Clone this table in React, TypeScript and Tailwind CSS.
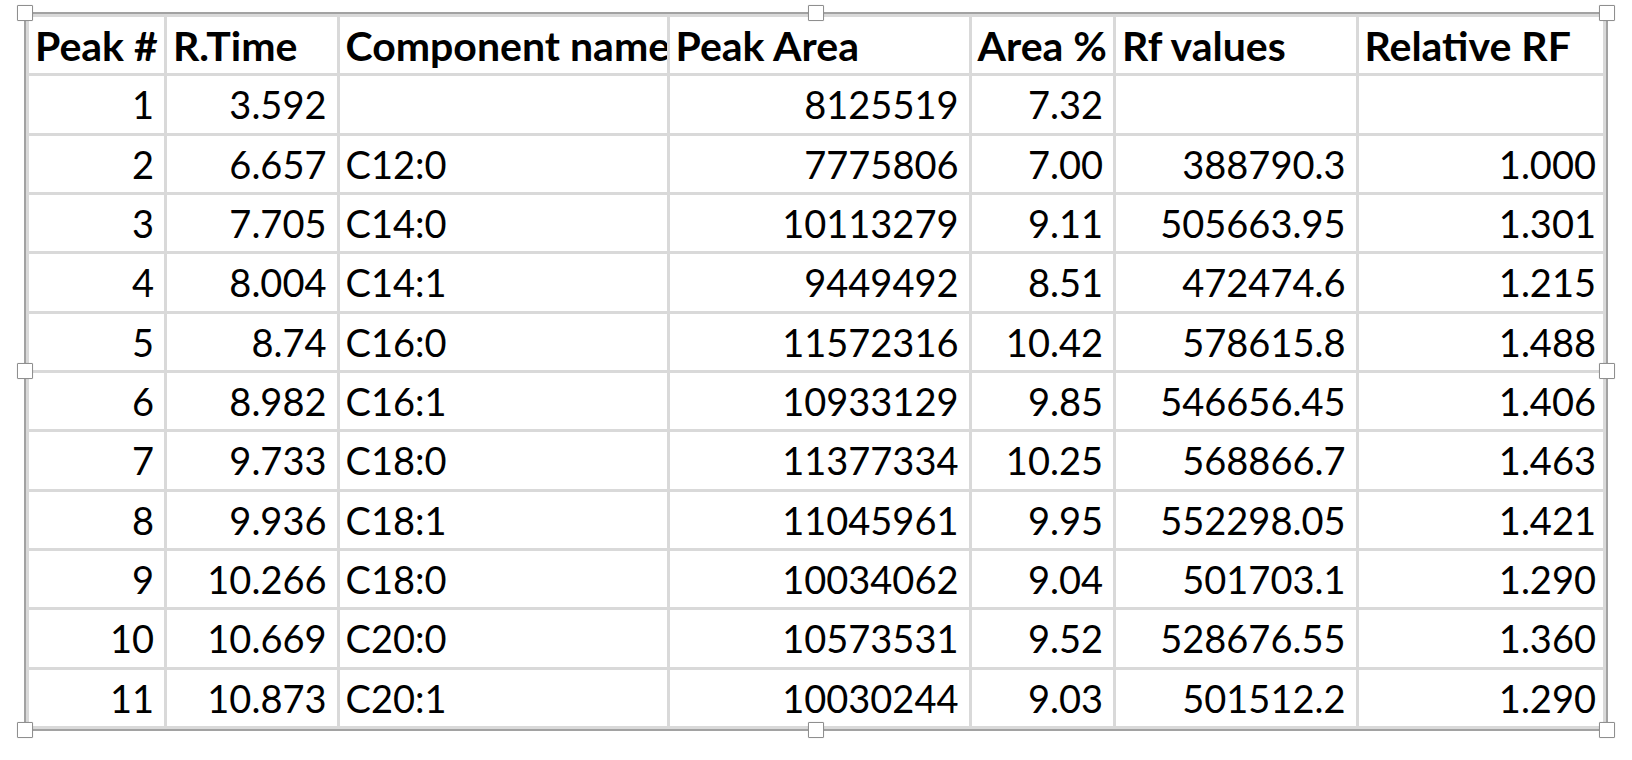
import React from 'react';

type Row = [string, string, string, string, string, string, string];

const headers = ['Peak #', 'R.Time', 'Component name', 'Peak Area', 'Area %', 'Rf values', 'Relative RF'];

const rows: Row[] = [
  ['1', '3.592', '', '8125519', '7.32', '', ''],
  ['2', '6.657', 'C12:0', '7775806', '7.00', '388790.3', '1.000'],
  ['3', '7.705', 'C14:0', '10113279', '9.11', '505663.95', '1.301'],
  ['4', '8.004', 'C14:1', '9449492', '8.51', '472474.6', '1.215'],
  ['5', '8.74', 'C16:0', '11572316', '10.42', '578615.8', '1.488'],
  ['6', '8.982', 'C16:1', '10933129', '9.85', '546656.45', '1.406'],
  ['7', '9.733', 'C18:0', '11377334', '10.25', '568866.7', '1.463'],
  ['8', '9.936', 'C18:1', '11045961', '9.95', '552298.05', '1.421'],
  ['9', '10.266', 'C18:0', '10034062', '9.04', '501703.1', '1.290'],
  ['10', '10.669', 'C20:0', '10573531', '9.52', '528676.55', '1.360'],
  ['11', '10.873', 'C20:1', '10030244', '9.03', '501512.2', '1.290'],
];

function Handle({ className }: { className: string }) {
  return (
    <div
      className={`absolute h-4 w-4 rounded-[1px] border border-[#8f8f8f] bg-white shadow-[0_0_1px_rgba(0,0,0,0.25)] ${className}`}
    />
  );
}

export default function App() {
  return (
    <div className="min-h-screen bg-white font-['Lato',sans-serif] text-black">
      <div className="pl-[24px] pt-[12px]">
        <div className="relative w-[1584px] border-2 border-[#a2a2a2]">
          <div className="grid grid-cols-[135px_169.5px_327px_299px_141.5px_239.5px_244.5px] auto-rows-[56.33px] gap-[3px] bg-[#d9d9d9] p-[3px]">
            {headers.map((h) => (
              <div
                key={h}
                className="flex items-center overflow-hidden whitespace-nowrap bg-white pl-[6px] text-[41px] font-bold leading-none"
              >
                {h}
              </div>
            ))}
            {rows.map((r, ri) =>
              r.map((cell, ci) => (
                <div
                  key={`${ri}-${ci}`}
                  className={
                    ci === 2
                      ? 'flex items-center overflow-hidden whitespace-nowrap bg-white pl-[6px] text-[38px] leading-none'
                      : ci === 6
                        ? 'flex items-center justify-end overflow-hidden whitespace-nowrap bg-white pr-[7px] text-[38px] leading-none'
                        : 'flex items-center justify-end overflow-hidden whitespace-nowrap bg-white pr-[10px] text-[38px] leading-none'
                  }
                >
                  {cell}
                </div>
              ))
            )}
          </div>

          {/* selection handles */}
          <Handle className="-left-[9px] -top-[9px]" />
          <Handle className="left-1/2 -top-[9px] -translate-x-1/2" />
          <Handle className="-right-[9px] -top-[9px]" />
          <Handle className="-left-[9px] top-1/2 -translate-y-1/2" />
          <Handle className="-right-[9px] top-1/2 -translate-y-1/2" />
          <Handle className="-left-[9px] -bottom-[9px]" />
          <Handle className="left-1/2 -bottom-[9px] -translate-x-1/2" />
          <Handle className="-right-[9px] -bottom-[9px]" />
        </div>
      </div>
    </div>
  );
}
